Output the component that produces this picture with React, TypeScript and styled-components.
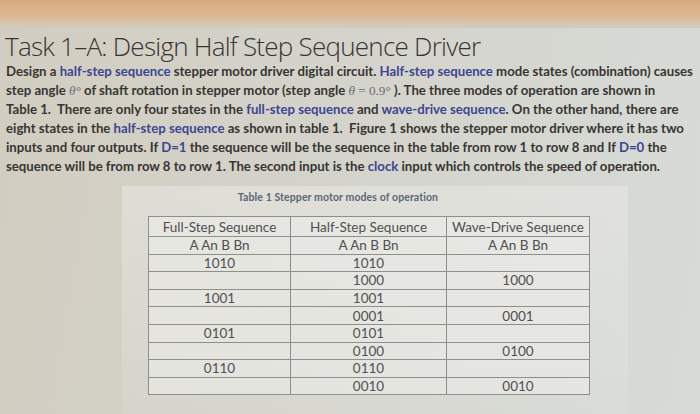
import React from 'react';
import styled, { createGlobalStyle } from 'styled-components';

const GlobalStyle = createGlobalStyle`
  html, body {
    margin: 0;
    padding: 0;
  }
  body {
    font-family: 'Lato', 'Open Sans', sans-serif;
    background: #d3d2ca;
  }
`;

const Page = styled.div`
  width: 700px;
  height: 414px;
  overflow: hidden;
  display: flex;
  flex-direction: column;
  background: linear-gradient(100deg, #d2cdc0 0%, #d4d3cb 45%, #d7dbd7 100%);
`;

const TopBand = styled.div`
  height: 28px;
  flex-shrink: 0;
  background: linear-gradient(180deg, #d6aa80 0%, #ddb690 55%, #d6c4ad 80%, #d2cdc0 100%);
`;

const Content = styled.div`
  display: flex;
  flex-direction: column;
  padding: 0 5px;
`;

const Title = styled.h1`
  margin: 2px 0 0 0;
  font-family: 'Open Sans', 'Lato', sans-serif;
  font-weight: 300;
  font-size: 26px;
  line-height: 32px;
  color: #363532;
  white-space: nowrap;
  letter-spacing: -0.75px;
`;

const Para = styled.div`
  display: flex;
  flex-direction: column;
  margin-top: 0;
  padding-left: 1px;
  font-weight: 700;
  font-size: 13.2px;
  line-height: 19px;
  color: #373632;
`;

const Line = styled.span`
  display: block;
  white-space: nowrap;
`;

const Hl = styled.span`
  color: #3d4690;
`;

const MathText = styled.span<{ italic?: boolean }>`
  font-family: 'Liberation Serif', serif;
  font-weight: 400;
  font-style: ${(props) => (props.italic ? 'italic' : 'normal')};
  color: #6a6c7a;
`;

const Figure = styled.div`
  margin: 10px 0 0 117px;
  width: 480px;
  padding: 4px 0 20px 26px;
  background: linear-gradient(180deg, rgba(235, 235, 230, 0.5) 0%, rgba(230, 232, 228, 0.15) 100%);
  display: flex;
  flex-direction: column;
`;

const Caption = styled.div`
  width: 440px;
  text-align: center;
  margin-left: -30px;
  font-weight: 700;
  font-size: 10.5px;
  line-height: 14px;
  color: #5b6776;
  letter-spacing: 0.1px;
`;

const Table = styled.table`
  margin-top: 12px;
  border-collapse: collapse;
  width: 441px;
  table-layout: fixed;
  font-size: 13.5px;
  color: #505050;
  background: rgba(236, 237, 233, 0.6);
`;

const Cell = styled.td<{ head?: boolean }>`
  border: 1px solid #8e8e8a;
  height: ${(props) => (props.head ? '19px' : '16.6px')};
  padding: 0;
  line-height: 14px;
  text-align: center;
  vertical-align: middle;
`;

const rows = [
  ['1010', '1010', ''],
  ['', '1000', '1000'],
  ['1001', '1001', ''],
  ['', '0001', '0001'],
  ['0101', '0101', ''],
  ['', '0100', '0100'],
  ['0110', '0110', ''],
  ['', '0010', '0010'],
];

export default function App() {
  return (
    <Page>
      <GlobalStyle />
      <TopBand />
      <Content>
        <Title>Task 1–A: Design Half Step Sequence Driver</Title>
        <Para>
          <Line>
            Design a <Hl>half-step sequence</Hl> stepper motor driver digital circuit. <Hl>Half-step sequence</Hl> mode
            states (combination) causes
          </Line>
          <Line>
            step angle <MathText italic>θ°</MathText> of shaft rotation in stepper motor (step angle{' '}
            <MathText italic>θ</MathText> <MathText>= 0.9° </MathText>). The three modes of operation are shown in
          </Line>
          <Line>
            Table 1.&nbsp; There are only four states in the <Hl>full-step sequence</Hl> and{' '}
            <Hl>wave-drive sequence</Hl>. On the other hand, there are
          </Line>
          <Line>
            eight states in the <Hl>half-step sequence</Hl> as shown in table 1.&nbsp; Figure 1 shows the stepper motor
            driver where it has two
          </Line>
          <Line>
            inputs and four outputs. If <Hl>D=1</Hl> the sequence will be the sequence in the table from row 1 to row 8
            and If <Hl>D=0</Hl> the
          </Line>
          <Line>
            sequence will be from row 8 to row 1. The second input is the <Hl>clock</Hl> input which controls the speed
            of operation.
          </Line>
        </Para>
        <Figure>
          <Caption>Table 1 Stepper motor modes of operation</Caption>
          <Table>
            <colgroup>
              <col style={{ width: 142 }} />
              <col style={{ width: 156 }} />
              <col style={{ width: 143 }} />
            </colgroup>
            <tbody>
              <tr>
                <Cell head>Full-Step Sequence</Cell>
                <Cell head>Half-Step Sequence</Cell>
                <Cell head>Wave-Drive Sequence</Cell>
              </tr>
              <tr>
                <Cell>A An B Bn</Cell>
                <Cell>A An B Bn</Cell>
                <Cell>A An B Bn</Cell>
              </tr>
              {rows.map((r, i) => (
                <tr key={i}>
                  {r.map((v, j) => (
                    <Cell key={j}>{v}</Cell>
                  ))}
                </tr>
              ))}
            </tbody>
          </Table>
        </Figure>
      </Content>
    </Page>
  );
}
